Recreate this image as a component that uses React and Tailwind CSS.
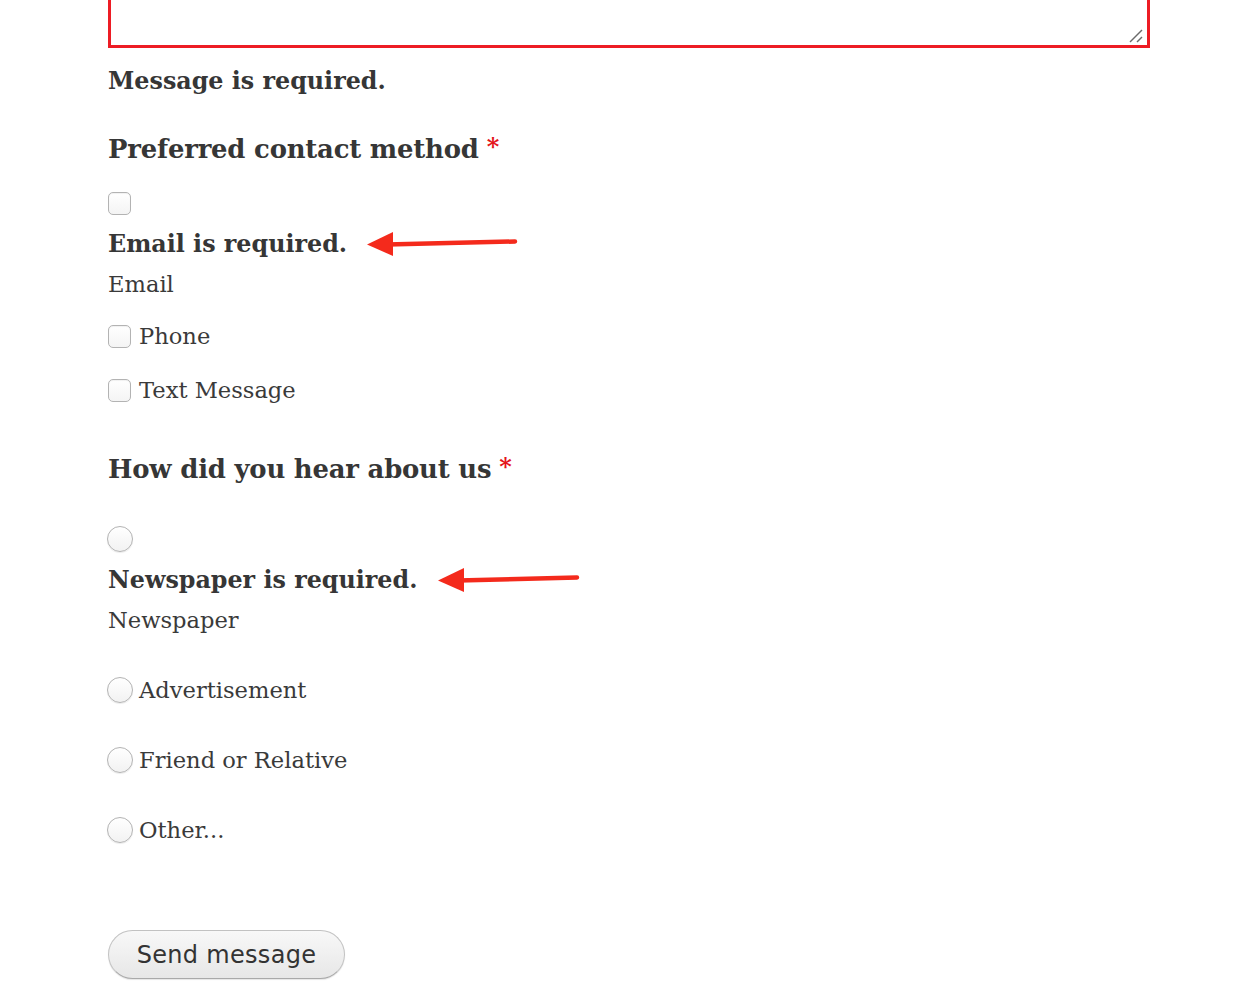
const serif = { fontFamily: '"DejaVu Serif", Georgia, serif' }

const Checkbox = () => (
    <input type="checkbox" className="appearance-none w-[23px] h-[23px] shrink-0 rounded-[5px] border border-[#b3b3b3] bg-gradient-to-b from-white to-[#f4f4f4] shadow-[inset_0_1px_1px_rgba(0,0,0,0.06)]" />
)

const Radio = () => (
    <input type="radio" className="appearance-none w-[26px] h-[26px] shrink-0 -ml-[1px] rounded-full border border-[#b3b3b3] bg-gradient-to-b from-white to-[#f2f2f2] shadow-[0_1px_1px_rgba(0,0,0,0.08)]" />
)

const Arrow = ({ className, length }) => (
    <svg className={className} width={length + 4} height="30" viewBox={`0 0 ${length + 4} 30`}>
        <path d={`M20 16.5 L${length} 13.5`} stroke="#f42a1c" strokeWidth="4.5" strokeLinecap="round" />
        <path d="M0 16.5 L26 4 L26 28 Z" fill="#f42a1c" />
    </svg>
)

const Heading = ({ children }) => (
    <h2 className="h-[36px] font-bold text-[25.9px] leading-[36px] text-[#363636] tracking-[-0.2px]" style={serif}>
        {children}
        <span className="text-[#e4141b] ml-[8px] text-[24px] leading-none relative -top-[3px]">*</span>
    </h2>
)

const ErrorText = ({ children, className = "" }) => (
    <div className={"font-bold text-[23.8px] leading-[32px] text-[#363636] " + className} style={serif}>{children}</div>
)

const OptionLabel = ({ children, className = "" }) => (
    <div className={"text-[22.6px] leading-[32px] text-[#3a3a3a] " + className} style={serif}>{children}</div>
)

const CheckRow = ({ label, className }) => (
    <div className={"flex items-center gap-[8px] h-[32px] " + className}>
        <Checkbox />
        <OptionLabel>{label}</OptionLabel>
    </div>
)

const RadioRow = ({ label, className }) => (
    <div className={"flex items-center gap-[6px] h-[32px] " + className}>
        <Radio />
        <OptionLabel>{label}</OptionLabel>
    </div>
)

const App = () => {
    return (
        <div className="w-[1252px] h-[998px] overflow-hidden bg-white">
            <div className="ml-[108px] w-[1042px] flex flex-col">
                <div className="relative -mt-[60px] h-[108px]">
                    <textarea className="w-full h-full resize-none border-[3px] border-[#ed1c24] bg-white outline-none" />
                    <svg className="absolute right-[6px] bottom-[4px]" width="16" height="16" viewBox="0 0 16 16">
                        <path d="M2 14 L14 2" stroke="#6b6b6b" strokeWidth="1.5" />
                        <path d="M9 14 L14 9" stroke="#6b6b6b" strokeWidth="1.5" />
                    </svg>
                </div>

                <ErrorText className="mt-[17px]">Message is required.</ErrorText>

                <div className="mt-[34px]">
                    <Heading>Preferred contact method</Heading>
                </div>

                <div className="mt-[25px] flex">
                    <Checkbox />
                </div>
                <div className="relative mt-[13px]">
                    <ErrorText>Email is required.</ErrorText>
                    <Arrow className="absolute left-[259px] top-[0px]" length={148} />
                </div>
                <OptionLabel className="mt-[8px]">Email</OptionLabel>
                <CheckRow label="Phone" className="mt-[20px]" />
                <CheckRow label="Text Message" className="mt-[22px]" />

                <div className="mt-[45px]">
                    <Heading>How did you hear about us</Heading>
                </div>

                <div className="mt-[39px] flex">
                    <Radio />
                </div>
                <div className="relative mt-[12px]">
                    <ErrorText>Newspaper is required.</ErrorText>
                    <Arrow className="absolute left-[330px] top-[0px]" length={139} />
                </div>
                <OptionLabel className="mt-[8px]">Newspaper</OptionLabel>
                <RadioRow label="Advertisement" className="mt-[38px]" />
                <RadioRow label="Friend or Relative" className="mt-[38px]" />
                <RadioRow label="Other..." className="mt-[38px]" />

                <div className="mt-[84px] flex">
                    <button
                        className="h-[49px] w-[237px] rounded-full border border-[#c2c2c2] border-b-[#a9a9a9] bg-gradient-to-b from-[#f8f8f8] to-[#e7e7e7] text-[24px] text-[#333] tracking-[0.3px] shadow-[0_1px_1px_rgba(0,0,0,0.1)]"
                        style={{ fontFamily: '"DejaVu Sans", Verdana, sans-serif' }}
                    >
                        Send message
                    </button>
                </div>
            </div>
        </div>
    )
}

export default App
